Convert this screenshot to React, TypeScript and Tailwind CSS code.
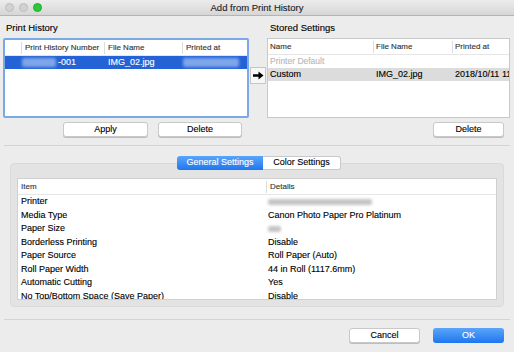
import React from "react";

const font = { fontFamily: '"Liberation Sans", Arial, sans-serif' };

function Btn({ children, className = "" }: { children: React.ReactNode; className?: string }) {
  return (
    <div
      className={`h-[15px] flex items-center justify-center rounded-[3px] bg-white border border-[#c9c9c9] shadow-[0_1px_0_#bdbdbd] text-[9px] text-black ${className}`}
    >
      {children}
    </div>
  );
}

function Blur({ className = "" }: { className?: string }) {
  return <div className={`blur-[1.5px] rounded-[2px] ${className}`} />;
}

const rows: [string, React.ReactNode][] = [
  ["Printer", <Blur className="w-[104px] h-[6px] bg-[#c4c4c4] mt-[1px]" />],
  ["Media Type", "Canon Photo Paper Pro Platinum"],
  ["Paper Size", <Blur className="w-[13px] h-[6px] bg-[#c4c4c4] mt-[1px]" />],
  ["Borderless Printing", "Disable"],
  ["Paper Source", "Roll Paper (Auto)"],
  ["Roll Paper Width", "44 in Roll (1117.6mm)"],
  ["Automatic Cutting", "Yes"],
  ["No Top/Bottom Space (Save Paper)", "Disable"],
];

export default function App() {
  return (
    <div
      className="w-[514px] h-[352px] bg-[#ececec] flex flex-col overflow-hidden text-black [-webkit-text-stroke:0.12px]"
      style={font}
    >
      {/* Title bar */}
      <div className="relative h-[16px] shrink-0 border-b border-[#b4b4b4] bg-gradient-to-b from-[#ececec] to-[#d6d6d6] flex items-center justify-center">
        <div className="absolute left-[5px] top-[3px] flex gap-[4px]">
          <div className="w-[9px] h-[9px] rounded-full bg-[#d2d2d2] border border-[#bcbcbc]" />
          <div className="w-[9px] h-[9px] rounded-full bg-[#d2d2d2] border border-[#bcbcbc] ml-[1px]" />
          <div className="w-[9px] h-[9px] rounded-full bg-[#2bc83a] border border-[#24a830] ml-[1px]" />
        </div>
        <span className="text-[9.5px] text-[#222] leading-none">Add from Print History</span>
      </div>

      {/* Top section */}
      <div className="flex pl-[3px] pr-[4px] pt-[5px]">
        {/* Left */}
        <div className="w-[246px] shrink-0 flex flex-col">
          <div className="h-[13px] leading-[13px] text-[9.5px] pl-[3px]">Print History</div>
          <div className="mt-[4px] h-[80px] bg-white border-2 border-[#7aa9e6] rounded-[2px] flex flex-col overflow-hidden">
            <div className="h-[16px] flex text-[8px] text-[#333] border-b border-[#e6e6e6] items-center">
              <div className="w-[17px] h-[12px] border-r border-[#dcdcdc]" />
              <div className="w-[83px] pl-[3px] h-[12px] leading-[12px] border-r border-[#dcdcdc]">Print History Number</div>
              <div className="w-[78px] pl-[3px] h-[12px] leading-[12px] border-r border-[#dcdcdc]">File Name</div>
              <div className="flex-1 pl-[3px] h-[12px] leading-[12px]">Printed at</div>
            </div>
            <div className="h-[13px] bg-[#2463d6] flex items-center text-[9px] text-white">
              <div className="w-[17px]" />
              <div className="w-[83px] flex items-center">
                <Blur className="w-[34px] h-[9px] bg-[#7fa6ea]" />
                <span className="ml-[2px]">-001</span>
              </div>
              <div className="w-[78px] pl-[3px]">IMG_02.jpg</div>
              <div className="flex-1">
                <Blur className="w-[56px] h-[9px] bg-[#7fa6ea]" />
              </div>
            </div>
          </div>
          <div className="mt-[4px] flex justify-end gap-[10px] pr-[7px]">
            <Btn className="w-[85px]">Apply</Btn>
            <Btn className="w-[84px]">Delete</Btn>
          </div>
        </div>

        {/* Arrow */}
        <div className="w-[18px] shrink-0 pt-[46px] pl-[1px]">
          <div className="w-[16px] h-[17px] bg-[#f7f7f7] border border-[#c6c6c6] flex items-center justify-center">
            <svg width="11" height="9" viewBox="0 0 11 9">
              <path d="M0 3.2h5.5V0.5L10.5 4.5 5.5 8.5V5.8H0z" fill="#000" />
            </svg>
          </div>
        </div>

        {/* Right */}
        <div className="flex-1 min-w-0 flex flex-col">
          <div className="h-[13px] leading-[13px] text-[9.5px] pl-[3px]">Stored Settings</div>
          <div className="mt-[4px] h-[80px] bg-white border border-[#c9c9c9] flex flex-col overflow-hidden">
            <div className="h-[16px] flex text-[8px] text-[#333] border-b border-[#e6e6e6] items-center">
              <div className="w-[106px] shrink-0 pl-[2px] h-[12px] leading-[12px] border-r border-[#dcdcdc]">Name</div>
              <div className="w-[79px] shrink-0 pl-[2px] h-[12px] leading-[12px] border-r border-[#dcdcdc]">File Name</div>
              <div className="flex-1 min-w-0 pl-[2px] h-[12px] leading-[12px] whitespace-nowrap">Printed at</div>
            </div>
            <div className="h-[13px] flex items-center text-[8.5px] text-[#b8b8b8] pl-[2px]">Printer Default</div>
            <div className="h-[13px] bg-[#dcdcdc] flex items-center text-[9px] whitespace-nowrap">
              <div className="w-[106px] shrink-0 pl-[2px]">Custom</div>
              <div className="w-[79px] shrink-0 pl-[2px]">IMG_02.jpg</div>
              <div className="flex-1 min-w-0 pl-[2px] overflow-hidden">2018/10/11 11:02</div>
            </div>
          </div>
          <div className="mt-[4px] flex justify-end pr-[6px]">
            <Btn className="w-[71px]">Delete</Btn>
          </div>
        </div>
      </div>

      {/* Separator */}
      <div className="mt-[8px] mx-[4px] h-[1px] bg-[#d4d4d4] shrink-0" />

      {/* Settings group */}
      <div className="mt-[10px] flex flex-col px-[10px]">
        <div className="relative z-10 flex justify-center h-[14px] pl-[4px]">
          <div className="w-[86px] h-[14px] rounded-l-[3px] bg-gradient-to-b from-[#5aa5fa] to-[#1c76ee] text-white text-[9px] flex items-center justify-center">
            General Settings
          </div>
          <div className="w-[78px] h-[14px] rounded-r-[3px] bg-white border border-[#c9c9c9] border-l-0 text-[9px] flex items-center justify-center">
            Color Settings
          </div>
        </div>
        <div className="-mt-[7px] h-[144px] rounded-[4px] bg-[#e3e3e3] border border-[#dadada] pt-[14px] px-[6px] pb-[6px]">
          <div className="h-[122px] bg-white border border-[#d0d0d0] flex flex-col overflow-hidden">
            <div className="h-[16px] shrink-0 flex items-center border-b border-[#e6e6e6] text-[8px] text-[#333]">
              <div className="w-[249px] pl-[3px] h-[12px] leading-[12px] border-r border-[#dcdcdc]">Item</div>
              <div className="pl-[3px]">Details</div>
            </div>
            {rows.map(([k, v]) => (
              <div key={k} className="h-[13.5px] shrink-0 flex items-center text-[9px] whitespace-nowrap">
                <div className="w-[249px] pl-[3px]">{k}</div>
                <div className="pl-[1px]">{v}</div>
              </div>
            ))}
          </div>
        </div>
      </div>

      {/* Separator */}
      <div className="mt-[12px] mx-[4px] h-[1px] bg-[#d4d4d4] shrink-0" />

      {/* Bottom buttons */}
      <div className="mt-[8px] flex justify-end gap-[13px] pr-[10px]">
        <Btn className="w-[71px]">Cancel</Btn>
        <div className="w-[71px] h-[15px] rounded-[3px] bg-gradient-to-b from-[#5aa5fa] to-[#1c76ee] text-white text-[9px] flex items-center justify-center">
          OK
        </div>
      </div>
    </div>
  );
}
